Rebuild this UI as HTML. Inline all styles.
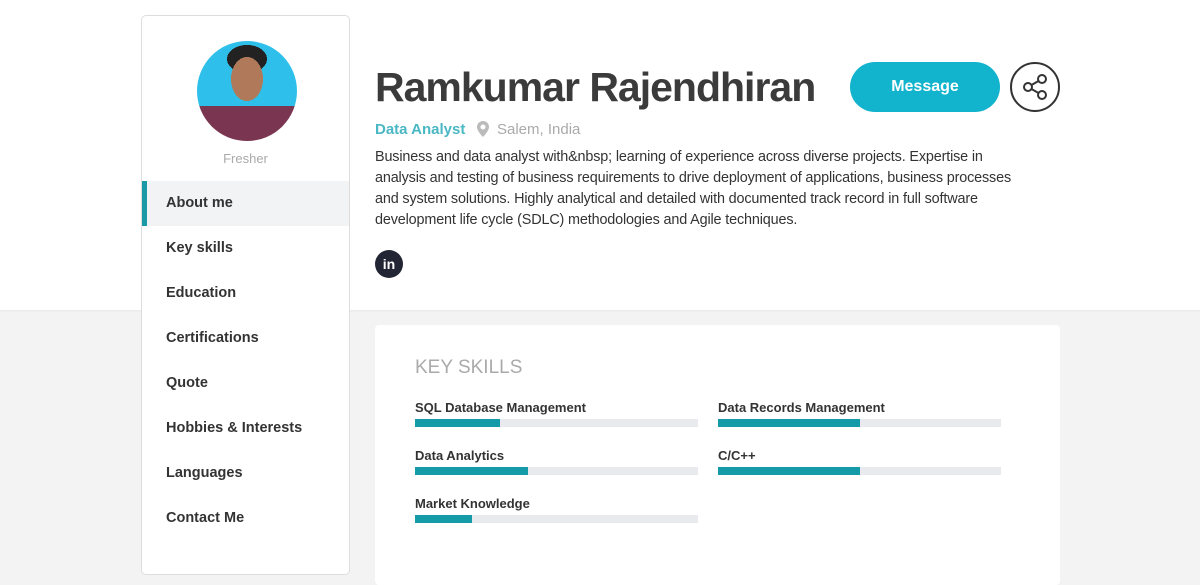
<!DOCTYPE html>
<html><head><style>
*{margin:0;padding:0;box-sizing:border-box}
body{width:1200px;height:550px;overflow:hidden;background:#f3f3f4;font-family:"Liberation Sans",sans-serif;position:relative;color:#333}
.top{position:absolute;left:0;top:0;width:1200px;height:310px;background:#fff;box-shadow:0 1px 2px rgba(0,0,0,.05)}
.side{position:absolute;left:141px;top:15px;width:209px;height:560px;background:#fff;border:1px solid #ddd;border-radius:5px}
.av{position:absolute;left:55px;top:25px;width:100px;height:100px;border-radius:50%;background:radial-gradient(ellipse 16px 22px at 50% 38%,#b07a5a 0 100%,transparent 100%),radial-gradient(ellipse 20px 14px at 50% 18%,#222 0 100%,transparent 100%),linear-gradient(#2ec0ea 0 65%,#7a3550 65%);overflow:hidden}
.fr{position:absolute;top:135px;width:100%;text-align:center;font-size:13px;color:#aaa}
.menu{position:absolute;top:165px;left:0;width:207px}
.menu div{height:45px;line-height:45px;padding-left:24px;font-size:14.5px;font-weight:bold;color:#333}
.menu .act{background:#f2f3f5;border-left:5px solid #1a9aa6;padding-left:19px}
h1{position:absolute;left:375px;top:64px;font-size:41px;font-weight:bold;color:#3b3b3b;letter-spacing:-1px}
.msg{position:absolute;left:850px;top:62px;width:150px;height:50px;border-radius:25px;background:#12b3cc;color:#fff;font-size:16px;font-weight:bold;text-align:center;line-height:50px}
.sh{position:absolute;left:1010px;top:62px;width:50px;height:50px;border-radius:50%;border:2px solid #333}
.role{position:absolute;left:375px;top:121px;font-size:15px;font-weight:bold;color:#4ab8c4}
.loc{position:absolute;top:121px;font-size:15px;color:#aaa}
.desc{position:absolute;left:375px;top:147px;width:655px;font-size:14.4px;line-height:21px;color:#333;letter-spacing:-.15px}
.li{position:absolute;left:375px;top:250px;width:28px;height:28px;border-radius:50%;background:#222533;color:#fff;font-weight:bold;font-size:14px;text-align:center;line-height:28px}
.card{position:absolute;left:375px;top:325px;width:685px;height:260px;background:#fff;border-radius:4px}
.card h2{position:absolute;left:40px;top:32px;font-size:19px;font-weight:normal;color:#aaa}
.sk{position:absolute;width:283px;font-size:13px;font-weight:bold;color:#333}
.bar{margin-top:4px;height:8px;background:#e8eaee}
.bar i{display:block;height:8px;background:#159aa8}
</style></head><body>
<div class="top"></div>
<div class="side">
<div class="av"></div>
<div class="fr">Fresher</div>
<div class="menu">
<div class="act">About me</div><div>Key skills</div><div>Education</div><div>Certifications</div><div>Quote</div><div>Hobbies &amp; Interests</div><div>Languages</div><div>Contact Me</div>
</div></div>
<h1>Ramkumar Rajendhiran</h1>
<div class="msg">Message</div>
<div class="sh"><svg width="46" height="46" viewBox="0 0 46 46" fill="none" stroke="#333" stroke-width="2"><circle cx="30" cy="15" r="4"/><circle cx="16" cy="23" r="4"/><circle cx="30" cy="31" r="4"/><path d="M19.5 21l7-4M19.5 25l7 4"/></svg></div>
<div class="role">Data Analyst</div>
<svg style="position:absolute;left:477px;top:121px" width="12" height="16" viewBox="0 0 12 16"><path d="M6 0a6 6 0 0 0-6 6c0 4 6 10 6 10s6-6 6-10a6 6 0 0 0-6-6zm0 8.5a2.5 2.5 0 1 1 0-5 2.5 2.5 0 0 1 0 5z" fill="#bbb"/></svg>
<div class="loc" style="left:497px">Salem, India</div>
<div class="desc">Business and data analyst with&amp;nbsp; learning of experience across diverse projects. Expertise in analysis and testing of business requirements to drive deployment of applications, business processes and system solutions. Highly analytical and detailed with documented track record in full software development life cycle (SDLC) methodologies and Agile techniques.</div>
<div class="li">in</div>
<div class="card">
<h2>KEY SKILLS</h2>
<div class="sk" style="left:40px;top:75px">SQL Database Management<div class="bar"><i style="width:30%"></i></div></div>
<div class="sk" style="left:343px;top:75px">Data Records Management<div class="bar"><i style="width:50%"></i></div></div>
<div class="sk" style="left:40px;top:123px">Data Analytics<div class="bar"><i style="width:40%"></i></div></div>
<div class="sk" style="left:343px;top:123px">C/C++<div class="bar"><i style="width:50%"></i></div></div>
<div class="sk" style="left:40px;top:171px">Market Knowledge<div class="bar"><i style="width:20%"></i></div></div>
</div>
</body></html>
